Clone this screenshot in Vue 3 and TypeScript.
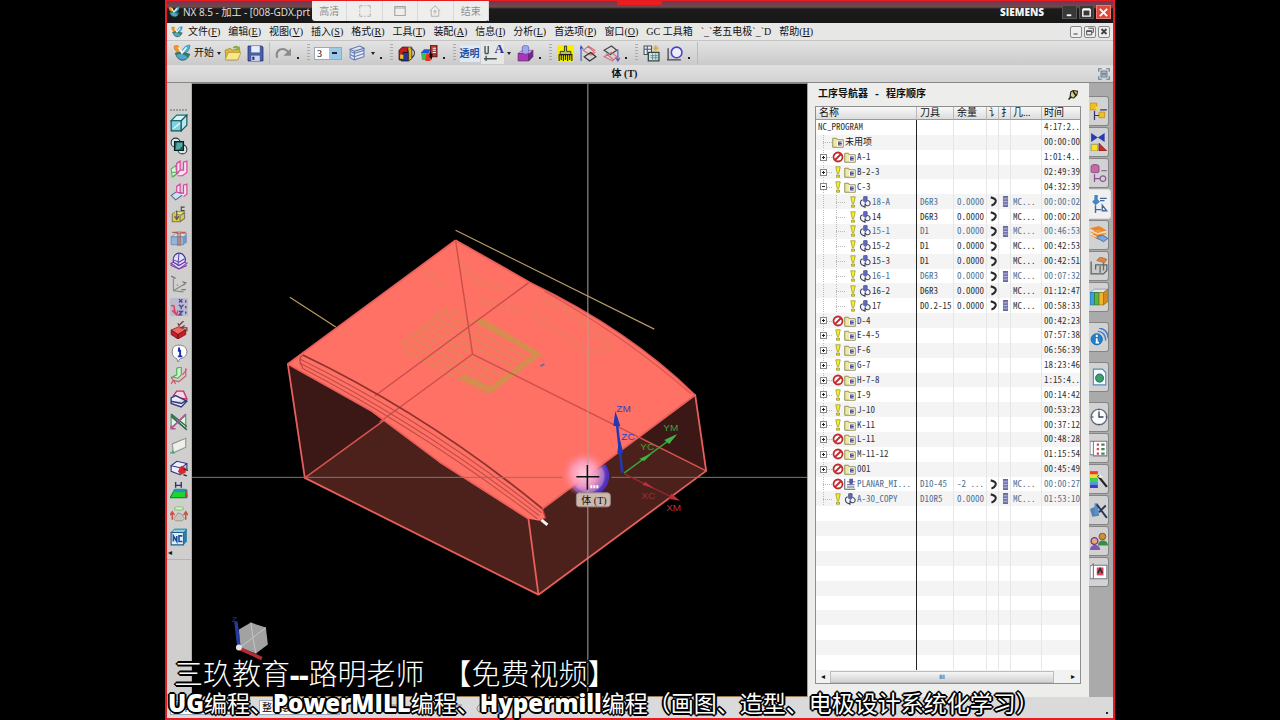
<script setup lang="ts">
type Shape = [d: string, fill: string, stroke?: string, width?: number]
interface Tool { kind: 'icon' | 'menu' | 'more' | 'sep' | 'grip'; icon?: string; label?: string; tone?: string }
interface Row { name: string; level: 'root' | 'unused' | 'group' | 'child' | 'op'; open?: boolean; off?: boolean; tool?: string; stock?: string; blue?: boolean; mill?: boolean; time: string }

const N = 'none'
const cube: Shape[] = [['M1 6 6 1H15L10 6Z', '#d9f4fa', '#177', 1], ['M1 6H10V15H1Z', '#7fd0e2', '#155', 1], ['M10 6 15 1V10L10 15Z', '#b8e6ef', '#155', 1], ['M3 13 9 8', N, '#eff']]

const icons: Record<string, Shape[]> = {
  nx: [['M1 2C4 0 7 3 7 8 4 8 1 6 1 2Z', '#f39a1e', '#b8640a', .5], ['M15 1C11 1 8 4 8 9 12 8 15 6 15 1Z', '#49b5dc', '#1a6a9a', .5], ['M2 8C6 7 12 8 15 9 12 17 4 16 2 8Z', '#3b7f4e', '#1d4c72', .5], ['M3 10C6 8 10 9 13 12 10 15 5 14 3 10Z', '#4fa6d2'], ['M5 3 8 8 12 3', N, '#fff', 1.4]],
  folder: [['M1 5 6 3 8 5 14 3 15 5 13 14H2Z', '#d9b93a', '#93791b', .6], ['M1 14 4 7H16L13 14Z', '#f8e68a', '#a98c23', .6], ['M8 3C9 0 13 0 14 2L15 1V5H11L13 3', '#7fb43b']],
  save: [['M1 1H14L15 2V15H1Z', '#4b5fa9', '#222f69', .8], ['M4 1H12V7H4Z', '#e9edf9'], ['M4 10H12V15H4Z', '#cfd5ea'], ['M5 11H7V14H5Z', '#27346f']],
  redo: [['M2 12C0 4 8 1 13 7', N, '#8b8b8b', 2], ['M15 3V10H8Z', '#8b8b8b']],
  layers: [['M2 4 11 1 15 3 6 6ZM2 4V6L6 8 15 5V3M2 7V9L6 11 15 8M2 10V12L6 14 15 11V4M6 6V14', '#e3eaf8', '#6679ad', 1]],
  cubes: [['M1 5 4 2H9V14H1Z', '#c2201c', '#400', .8], ['M5 7H10V15H3V11Z', '#23379d', '#112', .8], ['M2 9H5V13H2Z', '#eec225'], ['M9 2H13V13L10 15V7Z', '#e1bb22', '#432', .8], ['M12 3C17 5 16 10 13 12', N, '#333', 1]],
  cubepage: [['M9 0H15V11H9Z', '#bd3431', '#611', 1], ['M11 3H14M11 5H14M11 7H14', N, '#fff'], ['M0 7 3 4H9L7 8H0Z', '#1d54d8'], ['M0 8H5V14H1Z', '#32c44b'], ['M5 8H9V15H4Z', '#e8331e'], ['M8 6 11 9 10 14 8 11Z', '#101010']],
  noteA: [['M1 1V8M4 1V8M1 8H4M0 13H12M2 10V15', N, '#455', 1.3]],
  purple: [['M1 8 5 5H15L11 9Z', '#e3a9eb', '#747', .6], ['M1 8H11V15H1Z', '#a937b5', '#526', .6], ['M11 9 15 5V11L11 15Z', '#7b2391', '#526', .6], ['M5 2C5 0 11 0 11 2V7C10 9 6 9 5 7Z', '#9fa6ed', '#55a', .6]],
  brush: [['M0 0H16V16H0Z', '#f4f000'], ['M7 1H9V6H13V9H3V6H7Z', '#b9b96f', '#222', .8], ['M2 9H14V15M2 9V15M4 9V14M6 9V15M8 9V14M10 9V15M12 9V14', N, '#222', 1.1]],
  planeUp: [['M3 5 8 1 14 5 9 9ZM7 1 14 7 10 10', N, '#d46a79', 1], ['M4 11 10 7 15 11 9 15Z', N, '#333', 1.1], ['M1 15V2M0 4 1 1 3 4', N, '#35c', 1]],
  planeDown: [['M1 5 8 1 13 5 7 9Z', N, '#444', 1.1], ['M1 11 8 7 13 11 9 15ZM3 8 10 14', N, '#d46a79', 1], ['M14 4V15M12 12 14 15 16 12', N, '#55b', 1]],
  tableSun: [['M1 1H8V9H1ZM1 4H8M4 1V9', '#eef', '#455', 1], ['M5 7H15V15H5Z', '#cde7e2', '#344', 1.2], ['M7 10H14M7 12H14M9 8V15M12 8V15', N, '#688', .8], ['M12 0V6M9 3H15M10 1 14 5M14 1 10 5', N, '#d6a92a', .9]],
  circle: [['M5 7A5 5 0 1 0 15 7 5 5 0 1 0 5 7Z', '#eeeefa', '#4b45c4', 1.5], ['M2 3V14H14M1 14H4', N, '#445', 1.2]],
  cube,
  overlap: [['M1 5A4 4 0 1 0 9 5 4 4 0 1 0 1 5Z', '#dfe8e6', '#234', .9], ['M7 11A4 4 0 1 0 15 11 4 4 0 1 0 7 11Z', '#dfe8e6', '#234', .9], ['M4 4H12V12H4Z', '#1c5f5b', '#022', 1], ['M6 5H11V8L8 11H5Z', '#55aaa2']],
  sheetA: [['M1 8 5 5 6 12 2 15ZM1 11H6M3 15 8 11', '#dff3dc', '#57b75a', 1], ['M6 3 9 1 9 9 6 12ZM9 9H12V2L15 1V11L11 14H7', '#f9e3f0', '#da45a0', 1.1]],
  sheetB: [['M1 11 7 7 12 10 5 15Z', '#c6e4f3', '#568', .9], ['M6 3 9 1 9 9 6 8ZM9 9H12V2L15 1V10L12 12', '#f9e3f0', '#da45a0', 1.1]],
  boxC: [['M2 7 5 5H13L10 8Z', '#f2e670', '#885', .8], ['M2 7V14H9V8M10 8 13 6V11L9 14', '#e0c93a', '#776', .9], ['M6 4V11M4 9 6 12 8 9', N, '#555', 1], ['M13 1H10V4H13', N, '#444', 1]],
  split: [['M1 7 5 4H15L12 7Z', '#cbdcee', '#7893b6', .7], ['M1 7H12V14H1Z', '#91b5dc', '#6584ac', .7], ['M12 7 15 4V12L12 14Z', '#7597c2'], ['M7 2V15M9 2V15M2 3H7M10 3H14', N, '#ba5b45', 1]],
  dome: [['M1 10 7 7 15 10 8 15Z', '#eaddff', '#a13fbd', 1], ['M3 9C2 3 6 1 8 1 12 1 15 6 13 9L8 12Z', '#dfe1fa', '#3a3a94', 1], ['M3 7 8 9 13 6M8 1 7 12M1 10V12L8 15 15 12', N, '#6a3aa4', .9]],
  axes: [['M3 14V3M3 14 13 8M3 14 12 15', N, '#7b8a80', .9], ['M1 1 5 3M11 6 14 7 12 9M10 13H14M6 9H7', N, '#777', 1.1]],
  xyz: [['M0 0H16V16H0Z', '#bcbacd'], ['M8 1 11 4M11 1 8 4M8 6 10 8 12 6M10 8V10M8 12H11L8 15H11M14 2V4M14 7V9M14 12V14', N, '#45459a', 1.2], ['M1 7C6 5 2 12 6 15M2 11 6 15 7 11', N, '#df4063', 1.4]],
  redBook: [['M1 8 8 5 14 8 7 12Z', '#f1665f', '#822', .7], ['M1 8V12L7 16V12ZM7 12 14 8V12L7 16Z', '#c31f2b', '#711', .7], ['M7 2 8 4 12 0M13 4 10 6 15 6V9', N, '#733', 1.1]],
  info: [['M2 7C2 2 5 1 8 1 12 1 15 3 15 7 15 11 11 13 9 13L7 16 6 13C3 12 2 10 2 7Z', '#fff', '#777', .8], ['M7 6H9V11M7 11H11M8 3V5', N, '#1c2fb0', 1.7]],
  corner: [['M2 9 6 7 6 1 10 0 10 7 7 10Z', '#d4f0d4', '#47af4d', 1], ['M1 15 3 12 8 13 14 8V1M1 9 5 15M11 7 15 2', N, '#ca596c', 1]],
  redBlue: [['M3 5 6 1H12L15 8 6 7Z', '#f5d8e3', '#c92e70', 1.2], ['M1 7 5 5 15 10 10 15 1 12ZM1 10 10 12 15 9', '#eef', '#313b7c', 1.2]],
  cross: [['M1 2 14 14V2L1 13Z', '#e2f4e1', '#4ba356', 1], ['M1 3 15 15M1 1 15 12', N, '#365', 1.2], ['M1 14 14 1M1 11V14H5', N, '#bb4c9d', 1.3]],
  plane: [['M2 7 14 2V10L3 15Z', '#efefe9', '#8c9790', 1], ['M0 15H4M2 13 3 15', N, '#45a178', 1]],
  zoomBox: [['M1 6 6 2 15 4 10 8ZM1 6V11L9 14V8M15 4V9', '#eef', '#343980', 1], ['M10 6 14 8V12L10 14 7 11Z', '#d8282b'], ['M12 9 16 10M12 14 15 15', N, '#334', 1.2]],
  greenBlock: [['M4 7H15V14H0Z', '#18dc24', '#063', .8], ['M4 6H13L15 9H2Z', '#2a92b8'], ['M14 6 16 13H13Z', '#c62d7b'], ['M5 0V5M10 0V5M5 3H10', N, '#243577', 1.2]],
  lift: [['M4 3C4 1 12 1 12 3 12 5 4 5 4 3Z', '#d7f1cc', '#8bc27c', 1], ['M3 12 6 9 7 7 10 8 13 12 11 14H5Z', '#c6c6bd', '#969689', .8], ['M2 13V7M0 9 2 6 4 9M14 13V7M12 9 14 6 16 9', N, '#ca4f44', 1.3]],
  nc: [['M1 4 4 1H15L12 4Z', '#8dcce9', '#179', .8], ['M1 4H12V15H1Z', '#e4eef4', '#235d8a', 1], ['M12 4 15 1V12L12 15Z', '#297eaa'], ['M3 12V7L6 12V7M11 7H8V12H11', N, '#174f9c', 1.4]],
  tree: [['M0 1H6V7H0ZM8 9H13V14H8Z', '#f0bf25', '#c38d0a', .7], ['M5 4H9V7H5Z', '#f5d861'], ['M4 8V16M4 12H8M9 7H15', N, '#35356b', 1.1]],
  constraint: [['M1 0V8L7 4ZM13 0V8L7 4Z', '#253bb8'], ['M1 10H7V16H1Z', '#f5e128', '#776', .6], ['M8 9 15 16H8Z', '#c72c25', '#611', .5]],
  partTree: [['M1 2C1 0 8 0 8 2V7C8 8 1 8 1 7Z', '#c66a9f', '#748', .7], ['M4 9V16M4 13H9M10 6H15M9 13A2 2 0 1 0 14 13 2 2 0 1 0 9 13Z', N, '#84528e', 1.1]],
  opTree: [['M3 0H6V4L8 6 4 9 1 6 3 4Z', '#4386c6'], ['M4 9V16M4 13H9M8 3H14M8 5H12M10 9 14 14H10Z', N, '#46699c', 1.2]],
  stack: [['M0 2 8 0 15 4 7 6Z', '#ea852d'], ['M0 5 8 3 15 7 7 9Z', '#ef9b39'], ['M0 8 8 6 15 10 7 12Z', '#ed8b38'], ['M5 10 11 8 16 11 12 14Z', '#74a9e2', '#457', .6], ['M0 4 7 7 14 5M0 7 6 10', N, '#fbe3c2', 1]],
  machine: [['M1 4V15H12L15 12V7H5V11', '#c8ccc9', '#5c6460', 1.1], ['M6 3 9 0 15 2 13 5 9 4Z', '#e58243', '#963', .6], ['M9 8V14M12 5V12', N, '#626c68', 1.2]],
  books: [['M0 4 4 1H16L12 4Z', '#dfe8ee', '#678', .5], ['M0 4H4V15H0Z', '#3d9fdd', '#1b6b9b', .6], ['M4 4H8V15H4Z', '#58b63c', '#25742d', .6], ['M8 4H12V15H8Z', '#efb32c', '#9c6d15', .6], ['M12 4 16 1V12L12 15Z', '#d58a1d', '#9c6d15', .6]],
  ie: [['M1 10A5 5 0 1 0 11 10 5 5 0 1 0 1 10Z', '#247fcb', '#06a', .7], ['M6 9V13M5 13H8M6 6V8', N, '#fff', 1.6], ['M7 3C11 3 14 6 14 11M8 0C14 1 16 5 16 9', N, '#3b7bd1', 1.3]],
  web: [['M3 1H11L14 4V15H3Z', '#f5fbff', '#5b87b2', 1], ['M5 9A3 3 0 1 0 12 9 3 3 0 1 0 5 9Z', '#45a05b', '#278', 1]],
  clock: [['M1 8A7 7 0 1 0 15 8 7 7 0 1 0 1 8Z', '#fbfcff', '#67717d', 1.3], ['M8 3V8H12M8 1V2M8 14V15M2 8H3M14 8H15', N, '#345', 1.2]],
  palette: [['M0 2H3V14H0ZM3 2H15V15H3Z', '#fff', '#778', .9], ['M6 4H8V6H6ZM6 8H8V10H6ZM6 12H8V14H6Z', '#c8504a'], ['M10 4H13V6H10ZM10 8H13V10H10ZM10 12H13V14H10Z', '#49855b']],
  colorWand: [['M0 1H7V4H0Z', '#ef3b2d'], ['M0 4H7V7H0Z', '#f5de2b'], ['M0 7H7V10H0Z', '#46cc50'], ['M0 10H7V13H0Z', '#32a6df'], ['M0 13H7V16H0Z', '#5038be'], ['M7 5 15 15', N, '#222', 2], ['M9 4V7M7 6H11', N, '#fff', 1]],
  blueWand: [['M0 7 7 4 8 13 2 14Z', '#4e83b7'], ['M4 2H7V12H4Z', '#5f91c9'], ['M6 3 15 15M8 10 14 4', N, '#24395c', 1.7]],
  people: [['M8 4A3 3 0 1 0 14 4 3 3 0 1 0 8 4Z', '#cb9134', '#743', .7], ['M7 12C7 6 16 6 16 12Z', '#368f3e'], ['M1 8A3 3 0 1 0 7 8 3 3 0 1 0 1 8Z', '#e0ac78', '#739', 1.2], ['M0 16C0 10 9 10 9 16Z', '#7e59b0']],
  doc: [['M0 3 3 1V14H0ZM3 2H15V14H3Z', '#fff', '#778', 1], ['M6 4H12V11H6Z', '#ea4350'], ['M7 9 9 5 11 9', N, '#235', 1.5]],
  full: [['M1 5V1H5M11 1H15V5M15 11V15H11M5 15H1V11', N, '#557ca1', 1.5], ['M4 4H12V12H4Z', '#b9ccdf', '#556', 1], ['M5 7H11M5 9H11', N, '#456', 1]],
  no: [['M2 8A6 6 0 1 0 14 8 6 6 0 1 0 2 8ZM12 4 4 12', '#fff', '#c02b2e', 2.4]],
  bang: [['M5 1H11L9 10H7Z', '#f6ef27', '#8b8a27', .9], ['M6 12H10V15H6Z', '#e9de21', '#8b8a27', .9]],
  group: [['M1 3H6L7 5H15V15H1Z', '#eee9a7', '#87844c', 1.2], ['M7 6H14V14H7Z', '#fff'], ['M13 8H9V12H13M10 10H13', N, '#393888', 1.6]],
  op: [['M5 5C1 6 1 11 4 13L8 15V10C9 13 12 14 14 12 16 9 14 6 11 6', '#f4f5fb', '#3a3f55', 1.4], ['M6 1 9 0 11 1V6L9 9 6 7Z', '#5d67c4', '#334', .6]],
  planar: [['M1 1V15H15M4 9H14M4 12H14', N, '#555d78', 1.4], ['M7 1H12V7L9 9 7 7Z', '#565ca9'], ['M4 5H7M12 5H15', N, '#555', 1]],
  mill: [['M5 0H11V16H5Z', '#7676b4', '#445', .8], ['M5 4H11M5 8H11M5 12H11', N, '#cce', 1]],
  pin: [['M5 4 8 2 14 3 13 8 9 12 4 11Z', '#d9d27c', '#222', 1.5], ['M8 3 12 9M2 14 6 10', N, '#222', 2]],
  region: [['M1 5V1H5M7 1H9M11 1H15V5M15 7V9M15 11V15H11M9 15H7M5 15H1V11M1 9V7', N, '#a9a9a9', 1.2]],
  window: [['M1 2H15V14H1ZM1 4H15', N, '#a7a7a7', 1.6]],
  home: [['M1 8 8 1 15 8M3 7V15H13V7M8 7V12M6 9 8 7 10 9', N, '#a7a7a7', 1.2]],
}

const menus = ['文件(F)', '编辑(E)', '视图(V)', '插入(S)', '格式(R)', '工具(T)', '装配(A)', '信息(I)', '分析(L)', '首选项(P)', '窗口(O)', 'GC 工具箱', '`_`老五电极`_`D', '帮助(H)']

const toolsA: Tool[] = [{ kind: 'icon', icon: 'folder' }, { kind: 'icon', icon: 'save' }, { kind: 'sep' }, { kind: 'icon', icon: 'redo' }, { kind: 'more' }, { kind: 'grip' }]
const toolsB: Tool[] = [
  { kind: 'icon', icon: 'layers' }, { kind: 'menu' }, { kind: 'more' }, { kind: 'grip' },
  { kind: 'icon', icon: 'cubes' }, { kind: 'icon', icon: 'cubepage' }, { kind: 'more' }, { kind: 'grip' },
  { kind: 'icon', label: '透明', tone: 'clear' }, { kind: 'icon', icon: 'noteA', label: 'A', tone: 'note' }, { kind: 'menu' }, { kind: 'icon', icon: 'purple' }, { kind: 'more' }, { kind: 'grip' },
  { kind: 'icon', icon: 'brush' }, { kind: 'icon', icon: 'planeUp' }, { kind: 'icon', icon: 'planeDown' }, { kind: 'more' }, { kind: 'grip' },
  { kind: 'icon', icon: 'tableSun' }, { kind: 'icon', icon: 'circle' }, { kind: 'more' }, { kind: 'sep' },
]
const sideTools = ['cube', 'overlap', 'sheetA', 'sheetB', 'boxC', 'split', 'dome', 'axes', 'xyz', 'redBook', 'info', 'corner', 'redBlue', 'cross', 'plane', 'zoomBox', 'greenBlock', 'lift', 'nc']
const tabGroups = [['tree', 'constraint', 'partTree', 'opTree', 'stack', 'machine', 'books'], ['ie'], ['web'], ['clock', 'palette', 'colorWand', 'blueWand', 'people', 'doc']]

const group = (name: string, time: string, off = false, open = false): Row => ({ name, time, level: 'group', off, open })
const child = (name: string, tool: string, time: string, blue = false): Row => ({ name, tool, time, level: 'child', stock: '0.0000', blue, mill: blue })
const rows: Row[] = [
  { name: 'NC_PROGRAM', level: 'root', time: '4:17:2..' },
  { name: '未用项', level: 'unused', time: '00:00:00' },
  group('A-1', '1:01:4..', true), group('B-2-3', '02:49:39'), group('C-3', '04:32:39', false, true),
  child('18-A', 'D6R3', '00:00:02', true), child('14', 'D6R3', '00:00:20'), child('15-1', 'D1', '00:46:53', true),
  child('15-2', 'D1', '00:42:53'), child('15-3', 'D1', '00:42:51'), child('16-1', 'D6R3', '00:07:32', true),
  child('16-2', 'D6R3', '01:12:47'), { ...child('17', 'D0.2-15', '00:58:33'), mill: true },
  group('D-4', '00:42:23', true), group('E-4-5', '07:57:38'), group('F-6', '06:56:39'), group('G-7', '18:23:46'),
  group('H-7-8', '1:15:4..', true), group('I-9', '00:14:42'), group('J-10', '00:53:23'), group('K-11', '00:37:12'),
  group('L-11', '00:48:28', true), group('M-11-12', '01:15:54', true), group('001', '00:45:49', true),
  { name: 'PLANAR_MI...', level: 'op', off: true, tool: 'D10-45', stock: '-2 ...', blue: true, mill: true, time: '00:00:27' },
  { name: 'A-30_COPY', level: 'op', tool: 'D10R5', stock: '0.0000', blue: true, mill: true, time: '01:53:10' },
]
const blankRows = 37 - rows.length
const typeIcon = (r: Row) => r.level === 'child' ? 'op' : r.level === 'op' ? (r.off ? 'planar' : 'op') : 'group'

// parallel passes of the pocket toolpath on the top face
const passes = Array.from({ length: 9 }, (_, k) => `M${452 - k * 6} ${310 + k * 5}L${536 - k * 6} ${354 + k * 5}`).join('')
</script>

<template>
  <div class="screen">
    <div class="app">
      <header class="title">
        <svg class="ic" viewBox="0 0 16 16"><path v-for="(s, i) in icons.nx" :key="i" :d="s[0]" :fill="s[1]" :stroke="s[2]" :stroke-width="s[3]" /></svg>
        <h1>NX 8.5 - 加工 - [008-GDX.prt</h1>
        <div class="capture">
          <button>高清</button>
          <button v-for="n in ['region', 'window', 'home']" :key="n" :aria-label="n"><svg class="ic" viewBox="0 0 16 16"><path v-for="(s, i) in icons[n]" :key="i" :d="s[0]" :fill="s[1]" :stroke="s[2]" :stroke-width="s[3]" /></svg></button>
          <button>结束</button>
        </div>
        <i class="record"></i>
        <strong class="brand">SIEMENS</strong>
        <div class="winbtns">
          <button aria-label="Minimize"><svg viewBox="0 0 12 12"><path d="M3 9H8" stroke="#fff" stroke-width="2" /></svg></button>
          <button aria-label="Maximize"><svg viewBox="0 0 12 12"><path d="M2 3H10V10H2ZM2 2H10" fill="none" stroke="#fff" stroke-width="1.5" /></svg></button>
          <button class="close" aria-label="Close"><svg viewBox="0 0 12 12"><path d="M2 2 10 10M10 2 2 10" stroke="#fff" stroke-width="2" /></svg></button>
        </div>
      </header>

      <nav class="menubar">
        <svg class="ic" viewBox="0 0 16 16"><path v-for="(s, i) in icons.nx" :key="i" :d="s[0]" :fill="s[1]" :stroke="s[2]" :stroke-width="s[3]" /></svg>
        <button v-for="m in menus" :key="m">{{ m.replace(/\(.\)$/, '') }}<span v-if="/\(.\)$/.test(m)">(<u>{{ m.slice(-2, -1) }}</u>)</span></button>
        <div class="docbtns">
          <button aria-label="Minimize document"><svg viewBox="0 0 12 12"><path d="M3 9H8" stroke="#555" stroke-width="1.4" /></svg></button>
          <button aria-label="Restore document"><svg viewBox="0 0 12 12"><path d="M4 2H10V7H8M2 5H8V10H2ZM2 6H8" fill="none" stroke="#555" stroke-width="1.2" /></svg></button>
          <button aria-label="Close document"><svg viewBox="0 0 12 12"><path d="M3 3 9 9M9 3 3 9" stroke="#444" stroke-width="2.2" /></svg></button>
        </div>
      </nav>

      <div class="toolbar">
        <button class="start"><svg class="ic big" viewBox="0 0 16 16"><path v-for="(s, i) in icons.nx" :key="i" :d="s[0]" :fill="s[1]" :stroke="s[2]" :stroke-width="s[3]" /></svg>开始<i class="caret"></i></button>
        <template v-for="(t, k) in toolsA" :key="k">
          <button v-if="t.kind === 'icon'" class="tool" :aria-label="t.icon"><svg class="ic mid" viewBox="0 0 16 16"><path v-for="(s, i) in icons[t.icon!]" :key="i" :d="s[0]" :fill="s[1]" :stroke="s[2]" :stroke-width="s[3]" /></svg></button>
          <i v-else :class="t.kind"></i>
        </template>
        <label class="layer"><select aria-label="Work layer"><option>3</option></select></label>
        <template v-for="(t, k) in toolsB" :key="k">
          <button v-if="t.kind === 'icon'" class="tool" :class="t.tone" :aria-label="t.icon">
            <svg v-if="t.icon" class="ic mid" viewBox="0 0 16 16"><path v-for="(s, i) in icons[t.icon]" :key="i" :d="s[0]" :fill="s[1]" :stroke="s[2]" :stroke-width="s[3]" /></svg>
            <span v-if="t.label">{{ t.label }}</span>
          </button>
          <i v-else :class="t.kind"></i>
        </template>
      </div>

      <div class="prompt">
        <span>体 (T)</span>
        <button aria-label="Full screen"><svg class="ic" viewBox="0 0 16 16"><path v-for="(s, i) in icons.full" :key="i" :d="s[0]" :fill="s[1]" :stroke="s[2]" :stroke-width="s[3]" /></svg></button>
      </div>

      <div class="work">
        <aside class="side">
          <i class="hgrip"></i>
          <button v-for="n in sideTools" :key="n" :aria-label="n"><svg class="ic big" viewBox="0 0 16 16"><path v-for="(s, i) in icons[n]" :key="i" :d="s[0]" :fill="s[1]" :stroke="s[2]" :stroke-width="s[3]" /></svg></button>
          <span class="sidemore">◂</span>
        </aside>

        <main class="view">
          <svg viewBox="192 83 616 614" preserveAspectRatio="xMidYMid slice">
            <defs>
              <radialGradient id="glow"><stop offset="0" stop-color="#ffd0e4" /><stop offset=".55" stop-color="#ffa0c0" stop-opacity=".85" /><stop offset="1" stop-color="#ff8080" stop-opacity="0" /></radialGradient>
            </defs>
            <path d="M456 230 655 329M290 297 336 327" stroke="#b89a62" stroke-width="1.2" />
            <path d="M288 364 305 478 539 595 707 471 696 395 529 518 430 430Z" fill="#4c211c" />
            <path d="M288 364 305 478 385 420ZM696 395 707 471 641 438Z" fill="#3b1815" />
            <path d="M385 420 305 478M641 438 707 471" stroke="#d75350" stroke-width="1.5" />
            <path d="M456 240 530 282Q630 330 696 395L543 509 546 518 540 521 529 519 440 462Q400 432 372 411L288 364Z" fill="#ff7065" />
            <path d="M456 260 475 280 510 290M424 270 446 287M480 300 525 312M538 297 565 310 612 346 590 354 530 310" fill="none" stroke="#e1875b" stroke-width="9" stroke-dasharray="3 4" opacity=".45" />
            <path :d="passes" fill="none" stroke="#d3904f" stroke-width="2" stroke-dasharray="8 2" opacity=".75" />
            <path d="M448 308 402 346" fill="none" stroke="#d3904f" stroke-width="5" stroke-dasharray="4 2" opacity=".6" />
            <path d="M478 319 538 354 491 390 462 376" fill="none" stroke="#d0904c" stroke-width="6" opacity=".85" />
            <path d="M340 330 420 378M412 365 520 430M455 400 520 448" stroke="#d99157" stroke-width="1" stroke-dasharray="4 8" opacity=".6" />
            <path d="M456 240 473 354 380 422M473 354 641 438M530 282 375 396" fill="none" stroke="#c94f4b" stroke-width="1.4" />
            <path d="M530 282Q630 330 696 395M545 291Q627 337 692 394" fill="none" stroke="#dc5a55" stroke-width="1.3" />
            <path d="M303 355Q430 416 543 509" fill="none" stroke="#8f332e" stroke-width="1.8" />
            <path d="M300 359Q428 422 542 513M300 363Q425 427 540 516M302 368Q421 430 538 519" fill="none" stroke="#c24c47" stroke-width="1.1" />
            <path d="M303 355Q297 359 303 368M543 509 546 518 540 521" fill="none" stroke="#b84441" stroke-width="1.2" />
            <path d="M456 240 288 364 305 478 539 595 707 471 696 395 543 509M529 519 539 595M288 364 372 411Q400 432 440 462L529 519" fill="none" stroke="#e85f5b" stroke-width="1.8" stroke-linejoin="round" />
            <path d="M456 240 530 282" stroke="#e85f5b" stroke-width="1.8" />
            <path d="M541 366 545 364" stroke="#6471a6" stroke-width="2" />
            <path d="M542 520 548 525" stroke="#f3f3ee" stroke-width="3" />
            <path d="M573 488A19 19 0 1 0 606 464Z" fill="#4c31c4" />
            <path d="M576 486A15 15 0 1 0 602 467Z" fill="#7d66dd" />
            <circle cx="585" cy="474" r="23" fill="url(#glow)" />
            <path d="M588.5 83V697" stroke="#aaa59d" stroke-width="1" />
            <path d="M192 477.5H563M612 477.5H808" stroke="#777b72" stroke-width="1" />
            <path d="M588 465V490M577 477H600" stroke="#111" stroke-width="1.5" />
            <path d="M591 487H600" stroke="#fff" stroke-width="3" stroke-dasharray="2 1" />
            <path d="M623 473 617 418" stroke="#2039b5" stroke-width="2.5" /><path d="M616 411 621 426 614 426ZM620 437 624 453 618 453Z" fill="#2039b5" />
            <path d="M625 473 676 436" stroke="#32a83d" stroke-width="1.4" /><path d="M678 434 670 444 665 440ZM653 453 645 461 640 459Z" fill="#41b247" />
            <path d="M625 474 678 500" stroke="#9c282f" stroke-width="1.2" /><path d="M681 501 669 499 672 494ZM655 489 643 485 646 482Z" fill="#bd3038" />
            <g class="axis"><text x="617" y="412" fill="#2943c4">ZM</text><text x="622" y="440" fill="#2943c4">ZC</text><text x="664" y="431" fill="#36a640">YM</text><text x="641" y="450" fill="#4f9c35">YC</text><text x="642" y="499" fill="#a42831">XC</text><text x="667" y="511" fill="#b8323a">XM</text></g>
            <rect x="577" y="493" width="34" height="14" rx="3" fill="#cbb8b0" stroke="#a08e88" />
            <text class="tip" x="582" y="504">体 (T)</text>
            <path d="M239 630 251 623 266 628 268 645 256 654 240 648Z" fill="#a2a2a2" /><path d="M240 648 253 638 266 628M253 638 256 654M253 638 251 623" fill="none" stroke="#c6c6c6" />
            <path d="M239 647 236 622" stroke="#223b9c" stroke-width="3.5" /><path d="M240 649 262 659" stroke="#b32c34" stroke-width="3.5" /><circle cx="239" cy="648" r="3" fill="#e4e4e4" />
            <text class="zlabel" x="232" y="622">Z</text>
          </svg>
        </main>

        <section class="panel">
          <header><h2>工序导航器 - 程序顺序</h2><button aria-label="Pin"><svg class="ic" viewBox="0 0 16 16"><path v-for="(s, i) in icons.pin" :key="i" :d="s[0]" :fill="s[1]" :stroke="s[2]" :stroke-width="s[3]" /></svg></button></header>
          <div class="box">
            <div class="grid">
              <table>
                <colgroup><col class="c1"><col class="c2"><col class="c3"><col class="c4"><col class="c4"><col class="c6"><col></colgroup>
                <thead><tr><th>名称</th><th>刀具</th><th>余量</th><th>讠</th><th>扌</th><th>几...</th><th>时间</th></tr></thead>
                <tbody>
                  <tr v-for="r in rows" :key="r.name" :class="{ blue: r.blue }">
                    <td>
                      <div class="name" :class="r.level">
                        <span v-if="r.level !== 'root'" class="guide"><button v-if="r.level === 'group'" :aria-label="r.open ? 'Collapse' : 'Expand'" :class="{ plus: !r.open }"></button></span>
                        <span v-if="r.level === 'child'" class="guide inner"></span>
                        <svg v-if="r.level !== 'root' && r.level !== 'unused'" class="ic st" viewBox="0 0 16 16"><path v-for="(s, i) in icons[r.off ? 'no' : 'bang']" :key="i" :d="s[0]" :fill="s[1]" :stroke="s[2]" :stroke-width="s[3]" /></svg>
                        <svg v-if="r.level !== 'root'" class="ic" viewBox="0 0 16 16"><path v-for="(s, i) in icons[typeIcon(r)]" :key="i" :d="s[0]" :fill="s[1]" :stroke="s[2]" :stroke-width="s[3]" /></svg>
                        <span class="lbl">{{ r.name }}</span>
                      </div>
                    </td>
                    <td>{{ r.tool }}</td><td>{{ r.stock }}</td>
                    <td><svg v-if="r.tool" class="ic cell" viewBox="0 0 16 16"><path d="M4 2Q13 4 11 9 10 12 5 14" fill="none" stroke="#292929" stroke-width="3" /></svg></td>
                    <td><svg v-if="r.mill" class="ic cell" viewBox="0 0 16 16"><path v-for="(s, i) in icons.mill" :key="i" :d="s[0]" :fill="s[1]" :stroke="s[2]" :stroke-width="s[3]" /></svg></td>
                    <td>{{ r.tool ? 'MC...' : '' }}</td><td>{{ r.time }}</td>
                  </tr>
                  <tr v-for="n in blankRows" :key="n"><td v-for="c in 7" :key="c"></td></tr>
                </tbody>
              </table>
            </div>
            <div class="hscroll"><button aria-label="Scroll left">◂</button><span class="track"><i>III</i></span><button aria-label="Scroll right">▸</button></div>
          </div>
        </section>

        <aside class="tabs">
          <div v-for="(g, k) in tabGroups" :key="k">
            <button v-for="n in g" :key="n" :class="{ on: n === 'opTree' }" :aria-label="n"><svg class="ic big" viewBox="0 0 16 16"><path v-for="(s, i) in icons[n]" :key="i" :d="s[0]" :fill="s[1]" :stroke="s[2]" :stroke-width="s[3]" /></svg></button>
          </div>
        </aside>
      </div>

      <footer class="status">
        <select aria-label="Filter"><option>没有选择过滤器</option></select>
        <select aria-label="Scope"><option>整个装配</option></select>
        <svg viewBox="0 0 170 16"><path d="M2 8H12M35 3V13M40 5H52V13H40ZM76 5 84 11M104 5H114M135 5A4 4 0 1 0 135 12" fill="none" stroke="#b67b7b" /><circle cx="150" cy="9" r="4" fill="#4b80d0" /></svg>
        <i class="more"></i>
      </footer>
    </div>

    <div class="caption">
      <p class="one">三玖教育<b>--</b>路明老师<span>【免费视频】</span></p>
      <p class="two"><b>UG</b>编程、<b>PowerMILL</b>编程、<b>Hypermill</b>编程（画图、造型、电极设计系统化学习）</p>
    </div>
  </div>
</template>

<style>
body { margin: 0; background: #000; }
</style>

<style scoped>
* { box-sizing: border-box; }
button { padding: 0; border: 0; background: none; font: inherit; color: inherit; display: flex; align-items: center; justify-content: center; flex: none; }
i { font-style: normal; }
.screen { position: relative; height: 100vh; padding: 0 165px; background: #000; overflow: hidden; font: 10px/14px "Liberation Serif", "Noto Sans CJK SC", serif; color: #111; }
.app { height: 100%; display: flex; flex-direction: column; border: solid #e51d22; border-width: 1px 2px 2px 2px; background: #d8d8d8; }
.ic { width: 12px; height: 12px; flex: none; display: block; }
.mid { width: 17px; height: 17px; }
.big { width: 18px; height: 18px; }

.title { height: 22px; flex: none; display: flex; align-items: center; padding: 0 2px 0 1px; background: linear-gradient(#7c3150, #6b4a4c 6px, #1b1b1b 8px, #171717); position: relative; }
.title h1 { margin: 0 0 0 3px; width: 129px; font: 10px/16px "Open Sans", "Noto Sans CJK SC", sans-serif; color: #e4e4e4; white-space: nowrap; }
.capture { display: flex; align-self: flex-start; width: 177px; height: 20px; background: #eeeeec; border-radius: 0 0 3px 3px; color: #8f8f8f; font-family: "Noto Sans CJK SC", sans-serif; }
.capture button { flex: 1; border-right: 1px solid #d8d8d8; }
.record { position: absolute; left: 450px; top: 0; width: 45px; height: 4px; background: #ee1c20; }
.brand { margin-left: auto; color: #f2f2f2; font: 800 10px/14px "Open Sans", sans-serif; }
.winbtns, .docbtns { display: flex; gap: 3px; }
.winbtns { margin-left: 18px; gap: 2px; }
.winbtns button { width: 15px; height: 14px; background: #383838; border: 1px solid #555; }
.winbtns .close { background: #e0483c; border-color: #f07a70; }
.winbtns svg, .docbtns svg { width: 11px; height: 11px; }

.menubar { height: 18px; flex: none; display: flex; align-items: center; gap: 8px; padding: 0 3px 0 4px; background: #e7e7e6; border-bottom: 1px solid #c4c4c4; white-space: nowrap; }
.menubar > .ic { margin-right: -3px; }
.menubar u { text-decoration-thickness: 1px; }
.docbtns { margin-left: auto; gap: 2px; }
.docbtns button { width: 12px; height: 12px; border: 1px solid #888; border-radius: 2px; background: #eee; }

.toolbar { height: 25px; flex: none; display: flex; align-items: center; padding-left: 6px; background: linear-gradient(#e3e3e3, #cacaca); border-bottom: 1px solid #dedede; }
.start { gap: 3px; width: 48px; white-space: nowrap; }
.tool { width: 23px; height: 22px; position: relative; }
.caret, .menu { width: 0; height: 0; border: 2px solid transparent; border-top: 3px solid #222; border-bottom: 0; flex: none; }
.menu { margin: 0 3px; }
.more { width: 2px; height: 2px; margin: 10px 5px 0 2px; background: #222; flex: none; }
.sep { width: 1px; height: 22px; margin: 0 2px; background: #bcbcbc; flex: none; }
.grip { width: 3px; height: 18px; margin: 0 2px 0 3px; flex: none; background: repeating-linear-gradient(#aaa 0 1px, transparent 1px 3px); }
.layer { display: flex; margin: 0 3px 0 2px; }
.layer select, .status select { appearance: none; border: 1px solid #9ab; border-radius: 0; background: linear-gradient(#222, #222) right 4px center / 5px 2px no-repeat, linear-gradient(#9cc9ea, #9cc9ea) right / 12px 100% no-repeat, #fff; font: inherit; padding: 0 2px; }
.layer select { width: 28px; height: 13px; line-height: 11px; }
.clear span { width: 20px; height: 17px; line-height: 17px; background: #dce9f7; color: #1d50a0; font-weight: bold; }
.note { background: #e6e6e6; }
.note span { position: absolute; right: 0; top: 1px; font-weight: bold; font-size: 13px; line-height: 12px; color: #21369c; }

.prompt { height: 17px; flex: none; display: flex; align-items: center; justify-content: flex-end; background: linear-gradient(#e0e0e0, #d2d2d2); border-bottom: 1px solid #888; padding-right: 3px; font-weight: bold; }
.prompt span { flex: 1; text-align: center; margin-left: -16px; }

.work { flex: 1; min-height: 0; display: flex; }
.side { width: 25px; flex: none; padding-top: 26px; display: flex; flex-direction: column; align-items: center; background: #d0cfcd; border-right: 1px solid #bdae98; }
.side button { width: 22px; height: 23px; }
.hgrip { width: 18px; height: 2px; flex: none; background: repeating-linear-gradient(90deg, #999 0 2px, transparent 2px 3px); }
.sidemore { width: 100%; height: 12px; line-height: 9px; padding-left: 1px; border-bottom: 1px solid #b4b4b4; font-family: "DejaVu Sans", sans-serif; font-size: 8px; }
.view { flex: 1; min-width: 0; background: #000; border: solid #9a7b54; border-width: 1px 0; overflow: hidden; }
.view svg { width: 100%; height: 100%; display: block; }
.axis { font: 10px "Liberation Sans", sans-serif; }
.tip { font: 10px "Liberation Serif", "Noto Sans CJK SC", serif; fill: #111; }
.zlabel { font: 8px "Liberation Sans", sans-serif; fill: #223b9c; }

.panel { width: 282px; flex: none; display: flex; flex-direction: column; padding: 4px 8px 13px 7px; background: #ededec; border-left: 1px solid #b59f84; }
.panel header { height: 19px; flex: none; display: flex; align-items: center; justify-content: space-between; padding: 0 2px 4px 3px; }
.panel h2 { margin: 0; font: bold 10px/14px "Liberation Mono", "Noto Sans CJK SC", monospace; }
.box { flex: 1; min-height: 0; display: flex; flex-direction: column; border: 1px solid #8e8e8e; background: #fff; }
.grid { flex: 1; min-height: 0; overflow: hidden; }
table { width: 100%; height: 100%; table-layout: fixed; border-collapse: separate; border-spacing: 0; }
.c1 { width: 101px; } .c2 { width: 37px; } .c3 { width: 33px; } .c4 { width: 12px; } .c6 { width: 31px; }
th, td { padding: 0 0 0 3px; overflow: hidden; white-space: nowrap; text-align: left; border-right: 1px solid #e6e6e6; line-height: 12px; }
th { height: 13px; font-weight: normal; background: linear-gradient(#f8f8f8, #dcdcdc); border-right-color: #b8b8b8; border-bottom: 1px solid #999; }
td { font-family: "Noto Sans CJK SC", monospace; font-feature-settings: "hwid"; font-size: 9px; color: #333; }
th:last-child, td:last-child { border-right: 0; padding-left: 2px; }
th:nth-child(n + 4), td:nth-child(n + 4) { padding-left: 2px; }
td:first-child { border-right-color: #222; padding: 0; height: 14px; }
tbody tr:nth-child(even) { background: #f4f4f4; }
.blue td { color: #50708f; }
.name { height: 14px; display: flex; align-items: center; padding-left: 3px; }
.name.root { padding-left: 1px; }
.guide { width: 13px; height: 14px; flex: none; position: relative; display: flex; align-items: center; background: repeating-linear-gradient(#bbb 0 1px, transparent 1px 2px) 4px 0 / 1px 100% no-repeat, repeating-linear-gradient(90deg, #bbb 0 1px, transparent 1px 2px) 4px 7px / 9px 1px no-repeat; }
.child .guide:first-child { background: repeating-linear-gradient(#bbb 0 1px, transparent 1px 2px) 4px 0 / 1px 100% no-repeat; }
.child .guide.inner { width: 15px; }
.guide button { width: 7px; height: 7px; margin-left: 1px; border: 1px solid #888; background: linear-gradient(#222, #222) center / 3px 1px no-repeat, #fff; }
.guide .plus { background: linear-gradient(#222, #222) center / 3px 1px no-repeat, linear-gradient(#222, #222) center / 1px 3px no-repeat, #fff; }
.lbl { padding-left: 1px; }
.unused .lbl { color: #111; }
.name .st { width: 12px; }
.cell { width: 11px; height: 11px; margin-left: -1px; }
.hscroll { height: 13px; flex: none; display: flex; align-items: center; justify-content: space-between; background: #f2f2f2; font: 8px/10px "DejaVu Sans", sans-serif; }
.hscroll button { width: 14px; }
.track { flex: 1; height: 12px; margin-right: 12px; border: 1px solid #bdbdbd; background: linear-gradient(#f6f6f6, #d2d2d2); text-align: center; font-size: 6px; }

.tabs { width: 24px; flex: none; display: flex; flex-direction: column; gap: 10px; padding-top: 13px; background: #aaa; }
.tabs div { display: flex; flex-direction: column; gap: 1px; }
.tabs button { width: 20px; height: 30px; background: #d2d2d2; border: 1px solid #858585; border-left: 0; border-radius: 0 3px 3px 0; }
.tabs .on { width: 22px; background: #f0f0f0; border-color: #ddd; }

.status { height: 21px; flex: none; display: flex; align-items: center; gap: 8px; padding-left: 3px; background: #dadada; }
.status select { width: 81px; height: 15px; }
.status svg { width: 170px; height: 16px; }
.status .more { margin-left: auto; }

.caption { position: absolute; left: 168px; bottom: 5px; color: #fff; font-family: "Noto Sans CJK SC", sans-serif; text-shadow: 1px 0 #000, -1px 0 #000, 0 1px #000, 0 -1px #000, 1px 1px #000, -1px -1px #000, 1px -1px #000, -1px 1px #000, 2px 0 #000, -2px 0 #000, 0 2px #000, 0 -2px #000; white-space: nowrap; }
.caption p { margin: 0; }
.one { padding-left: 6px; font-size: 29px; line-height: 32px; font-weight: 300; }
.one span { margin-left: 18px; }
.two { font-size: 23px; line-height: 25px; }
.two b { font: 800 24px/25px "Open Sans", sans-serif; }
.one b { font: 800 29px/32px "Open Sans", sans-serif; }
</style>
